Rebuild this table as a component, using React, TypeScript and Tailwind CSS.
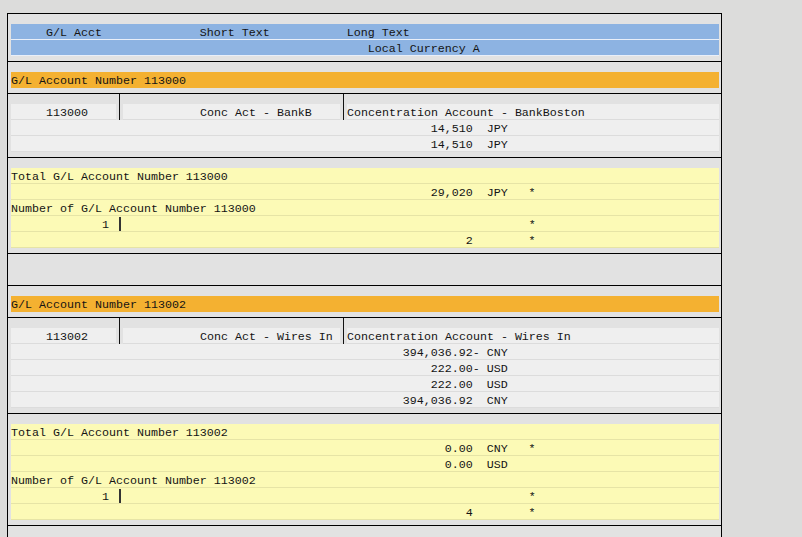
type Seg = [number, string];

// place text segments on a fixed character grid (7px per column)
function line(segs: Seg[]): string {
  let out = '';
  for (const [col, text] of segs) {
    while (out.length < col) out += ' ';
    out += text;
  }
  return out;
}

type Row =
  | { kind: 'text'; segs: Seg[] }
  | { kind: 'cells'; acct: string; short: string; long: string }
  | { kind: 'count'; n: string; star: boolean };

interface Section {
  tone: 'blue' | 'orange' | 'gray' | 'yellow' | 'empty';
  rows: Row[];
}

const tones = {
  blue: 'bg-[#8db3e2] border-[#e9eff9]',
  orange: 'bg-[#f4b131] border-[#f4b131]',
  gray: 'bg-[#efefef] border-[#dcdcdc]',
  yellow: 'bg-[#fcfab6] border-[#e6e4a6]',
  empty: 'bg-transparent border-transparent',
};

const sections: Section[] = [
  {
    tone: 'blue',
    rows: [
      { kind: 'text', segs: [[5, 'G/L Acct'], [27, 'Short Text'], [48, 'Long Text']] },
      { kind: 'text', segs: [[51, 'Local Currency A']] },
    ],
  },
  { tone: 'orange', rows: [{ kind: 'text', segs: [[0, 'G/L Account Number 113000']] }] },
  {
    tone: 'gray',
    rows: [
      { kind: 'cells', acct: '113000', short: 'Conc Act - BankB', long: 'Concentration Account - BankBoston' },
      { kind: 'text', segs: [[60, '14,510'], [68, 'JPY']] },
      { kind: 'text', segs: [[60, '14,510'], [68, 'JPY']] },
    ],
  },
  {
    tone: 'yellow',
    rows: [
      { kind: 'text', segs: [[0, 'Total G/L Account Number 113000']] },
      { kind: 'text', segs: [[60, '29,020'], [68, 'JPY'], [74, '*']] },
      { kind: 'text', segs: [[0, 'Number of G/L Account Number 113000']] },
      { kind: 'count', n: '1', star: true },
      { kind: 'text', segs: [[65, '2'], [74, '*']] },
    ],
  },
  { tone: 'empty', rows: [{ kind: 'text', segs: [] }] },
  { tone: 'orange', rows: [{ kind: 'text', segs: [[0, 'G/L Account Number 113002']] }] },
  {
    tone: 'gray',
    rows: [
      { kind: 'cells', acct: '113002', short: 'Conc Act - Wires In', long: 'Concentration Account - Wires In' },
      { kind: 'text', segs: [[56, '394,036.92-'], [68, 'CNY']] },
      { kind: 'text', segs: [[60, '222.00-'], [68, 'USD']] },
      { kind: 'text', segs: [[60, '222.00'], [68, 'USD']] },
      { kind: 'text', segs: [[56, '394,036.92'], [68, 'CNY']] },
    ],
  },
  {
    tone: 'yellow',
    rows: [
      { kind: 'text', segs: [[0, 'Total G/L Account Number 113002']] },
      { kind: 'text', segs: [[62, '0.00'], [68, 'CNY'], [74, '*']] },
      { kind: 'text', segs: [[62, '0.00'], [68, 'USD']] },
      { kind: 'text', segs: [[0, 'Number of G/L Account Number 113002']] },
      { kind: 'count', n: '1', star: true },
      { kind: 'text', segs: [[65, '4'], [74, '*']] },
    ],
  },
];

const txt = 'whitespace-pre leading-[14px] pt-[2px]';

function Divider({ tall }: { tall?: boolean }) {
  return (
    <div className={`w-[7px] flex justify-center ${tall ? 'h-[26px] -mt-[10px]' : 'h-[16px]'}`}>
      <div className={tall ? 'w-px h-full bg-[#111]' : 'w-[2px] h-[14px] mt-[1px] bg-[#333]'} />
    </div>
  );
}

function RowView({ row, tone }: { row: Row; tone: Section['tone'] }) {
  const c = tones[tone];
  if (row.kind === 'cells') {
    return (
      <div className="flex items-start h-[16px]">
        <div className={`w-[105px] h-[16px] border-b ${c} ${txt}`}>{line([[5, row.acct]])}</div>
        <Divider tall />
        <div className={`w-[217px] h-[16px] border-b ${c} ${txt}`}>{line([[11, row.short]])}</div>
        <Divider tall />
        <div className={`flex-1 h-[16px] border-b ${c} ${txt}`}>{row.long}</div>
      </div>
    );
  }
  if (row.kind === 'count') {
    return (
      <div className={`flex h-[16px] border-b ${c}`}>
        <div className={`w-[105px] ${txt}`}>{line([[13, row.n]])}</div>
        <Divider />
        <div className={`flex-1 ${txt}`}>{row.star ? line([[58, '*']]) : ''}</div>
      </div>
    );
  }
  return <div className={`h-[16px] border-b ${c} ${txt}`}>{line(row.segs)}</div>;
}

export default function App() {
  return (
    <div className="w-[802px] h-[537px] overflow-hidden bg-[#dcdcdb] pt-[13px] pl-[7px]">
      <div
        className="w-[715px] border border-black bg-[#e2e2e2] text-[11.667px] text-[#141414]"
        style={{ fontFamily: '"Liberation Mono", "DejaVu Sans Mono", monospace' }}
      >
        {sections.map((s, i) => (
          <div key={i} className={`pt-[10px] pb-[5px] pl-[3px] pr-[2px] ${i > 0 ? 'border-t border-black' : ''}`}>
            {s.rows.map((r, j) => (
              <RowView key={j} row={r} tone={s.tone} />
            ))}
          </div>
        ))}
        <div className="border-t border-black h-[60px]" />
      </div>
    </div>
  );
}
